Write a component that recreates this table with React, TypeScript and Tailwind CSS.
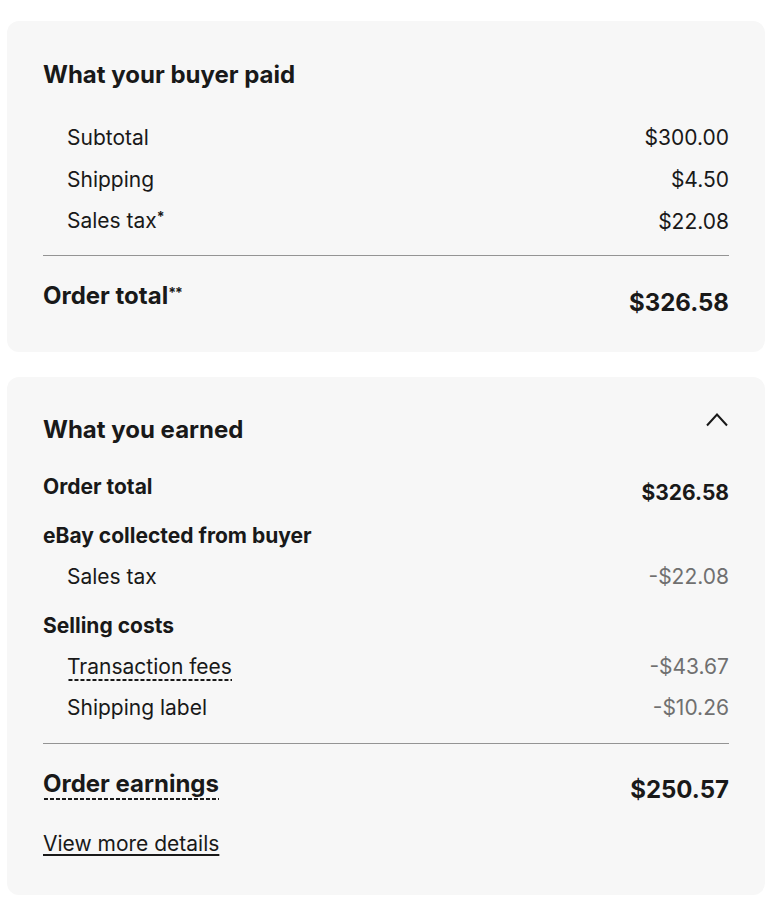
import React from "react";

const font = { fontFamily: "Inter, 'Noto Sans', sans-serif" };

const Dashed = ({ children, className = "" }: { children: React.ReactNode; className?: string }) => (
  <span
    className={`inline-block bg-[linear-gradient(to_right,#191919_62%,transparent_0)] bg-[length:6px_2px] bg-bottom bg-repeat-x ${className}`}
  >
    {children}
  </span>
);

const Row = ({ label, amount, muted = false, h = "h-[42px]" }: { label: React.ReactNode; amount: string; muted?: boolean; h?: string }) => (
  <div className={`flex ${h} items-center justify-between pl-6 text-[21px] leading-[28px]`}>
    <span>{label}</span>
    <span className={muted ? "text-[#707070]" : ""}>{amount}</span>
  </div>
);

const Star = ({ n = 1 }: { n?: number }) => (
  <span className="relative -top-[6px] text-[14px] font-bold tracking-[-1px]">{"*".repeat(n)}</span>
);

export default function App() {
  return (
    <div style={font} className="min-h-screen bg-white pl-[7px] pr-[5px] pt-[21px] text-[#191919]">
      {/* What your buyer paid */}
      <section className="rounded-xl bg-[#f7f7f7] px-9 pb-[33px] pt-10">
        <h2 className="text-[24px] font-bold leading-[28px]">What your buyer paid</h2>
        <div className="mt-7">
          <Row label="Subtotal" amount="$300.00" />
          <Row label="Shipping" amount="$4.50" />
          <Row label={<>Sales tax<Star /></>} amount="$22.08" />
        </div>
        <div className="mt-3 h-px bg-[#949494]" />
        <div className="mt-6 flex items-start justify-between text-[24px] font-bold leading-[32px]">
          <span>
            Order total<Star n={2} />
          </span>
          <span className="mt-[7px]">$326.58</span>
        </div>
      </section>

      {/* What you earned */}
      <section className="mt-[25px] rounded-xl bg-[#f7f7f7] px-9 pb-[37px] pt-[39px]">
        <div className="flex items-start justify-between">
          <h2 className="text-[24px] font-bold leading-[28px]">What you earned</h2>
          <button className="-mt-2 flex h-6 w-6 items-center justify-center" aria-label="Collapse">
            <svg width="24" height="24" viewBox="0 0 24 24" fill="none">
              <path d="M2 17.5 12 6.5l10 11" stroke="#191919" strokeWidth="2" />
            </svg>
          </button>
        </div>

        <div className="mt-[22px] flex h-[41px] items-start justify-between pt-[7px] text-[21px] font-bold leading-[28px]">
          <span>Order total</span>
          <span className="mt-[6px]">$326.58</span>
        </div>

        <div className="mt-2 flex h-[41px] items-center text-[21px] font-bold leading-[28px]">eBay collected from buyer</div>
        <Row h="h-[41px]" label="Sales tax" amount="-$22.08" muted />

        <div className="mt-2 flex h-[41px] items-center text-[21px] font-bold leading-[28px]">Selling costs</div>
        <Row h="h-[41px]" label={<Dashed className="leading-[28px]">Transaction fees</Dashed>} amount="-$43.67" muted />
        <Row h="h-[41px]" label="Shipping label" amount="-$10.26" muted />

        <div className="mt-[15px] h-px bg-[#949494]" />
        <div className="mt-6 flex items-start justify-between text-[24px] font-bold leading-[32px]">
          <Dashed className="leading-[32px]">Order earnings</Dashed>
          <span className="mt-[6px]">$250.57</span>
        </div>

        <a href="#" className="mt-6 block w-fit text-[21px] leading-[28px] underline decoration-2 underline-offset-[3px]">
          View more details
        </a>
      </section>
    </div>
  );
}
